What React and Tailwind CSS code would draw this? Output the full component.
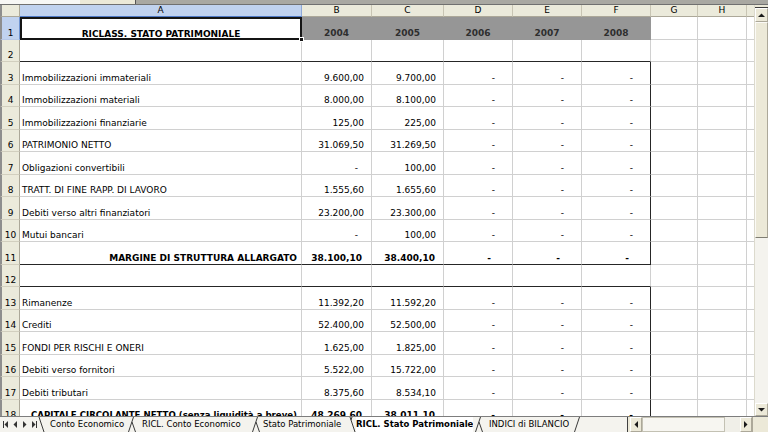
import React from "react";

const F = "font-['DejaVu_Sans',sans-serif]";
const GRID = "grid grid-cols-[20px_282px_70px_72px_69px_69px_69px_47px_49px_1fr]";
const LETTERS = ["A", "B", "C", "D", "E", "F", "G", "H"];

const RB = {
  light: "border-r-[#d0d0d0]",
  dark: "border-r-[#262626]",
  gray: "border-r-[#969696]",
};
const BB = {
  light: "border-b-[#d0d0d0]",
  dark: "border-b-[#262626]",
  gray: "border-b-[#969696]",
};

function Cell({ children, r = "light", b = "light", cls = "" }) {
  return (
    <div
      className={`flex items-end pb-0 overflow-hidden whitespace-nowrap border-r border-b ${RB[r]} ${BB[b]} ${cls}`}
    >
      {children}
    </div>
  );
}

const rows = [
  { n: 2 },
  { n: 3, a: "Immobilizzazioni immateriali", v: ["9.600,00", "9.700,00", "-", "-", "-"] },
  { n: 4, a: "Immobilizzazioni materiali", v: ["8.000,00", "8.100,00", "-", "-", "-"] },
  { n: 5, a: "Immobilizzazioni finanziarie", v: ["125,00", "225,00", "-", "-", "-"] },
  { n: 6, a: "PATRIMONIO NETTO", v: ["31.069,50", "31.269,50", "-", "-", "-"] },
  { n: 7, a: "Obligazioni convertibili", v: ["-", "100,00", "-", "-", "-"] },
  { n: 8, a: "TRATT. DI FINE RAPP. DI LAVORO", v: ["1.555,60", "1.655,60", "-", "-", "-"] },
  { n: 9, a: "Debiti verso altri finanziatori", v: ["23.200,00", "23.300,00", "-", "-", "-"] },
  { n: 10, a: "Mutui bancari", v: ["-", "100,00", "-", "-", "-"] },
  { n: 11, a: "MARGINE DI STRUTTURA ALLARGATO", v: ["38.100,10", "38.400,10", "-", "-", "-"], bold: true, wide: true },
  { n: 12 },
  { n: 13, a: "Rimanenze", v: ["11.392,20", "11.592,20", "-", "-", "-"] },
  { n: 14, a: "Crediti", v: ["52.400,00", "52.500,00", "-", "-", "-"] },
  { n: 15, a: "FONDI PER RISCHI E ONERI", v: ["1.625,00", "1.825,00", "-", "-", "-"] },
  { n: 16, a: "Debiti verso fornitori", v: ["5.522,00", "15.722,00", "-", "-", "-"] },
  { n: 17, a: "Debiti tributari", v: ["8.375,60", "8.534,10", "-", "-", "-"] },
  { n: 18, a: "CAPITALE CIRCOLANTE NETTO (senza liquidità a breve)", v: ["48.269,60", "38.011,10", "-", "-", "-"], bold: true, long: true },
];

function RowHead({ n, sel }) {
  return (
    <div
      className={`flex items-end justify-center pb-0 border-l-2 border-l-[#8e8e8e] border-r border-b ${
        sel ? "bg-[#c0d2ef] border-r-[#6f93d0] border-b-[#b7c8e6]" : "bg-[#ebeadb] border-r-[#aca899] border-b-[#d2cfbf]"
      }`}
    >
      {n}
    </div>
  );
}

function valuePad(col, val, row) {
  if (col <= 1) {
    if (val === "-") return "pr-[13px]";
    if (row.bold) return col === 0 ? "pr-[9px]" : "pr-[8px]";
    return "pr-[7px]";
  }
  return row.wide ? "pr-[21px]" : "pr-[17px]";
}

function DataRow({ row }) {
  const h = row.n % 2 === 1 ? "h-[23px]" : "h-[22px]";
  const inBox = (row.n >= 3 && row.n <= 11) || row.n >= 13;
  const bottomDark = row.n === 2 || row.n === 11 || row.n === 12;
  const b = bottomDark ? "dark" : "light";
  const v = row.v || ["", "", "", "", ""];
  return (
    <div className={`${GRID} ${h} shrink-0`}>
      <RowHead n={row.n} />
      <Cell
        b={b}
        cls={`${row.bold ? "font-bold justify-end pr-[4px]" : "justify-start pl-[2px]"} ${
          row.long ? "text-[8.6px]" : ""
        }`}
      >
        {row.a || ""}
      </Cell>
      {v.map((val, i) => (
        <Cell
          key={i}
          b={b}
          r={i === 4 && inBox ? "dark" : "light"}
          cls={`justify-end ${valuePad(i, val, row)} ${row.bold ? "font-bold" : ""}`}
        >
          {val}
        </Cell>
      ))}
      <Cell />
      <Cell />
      <div className="border-b border-b-[#d0d0d0]" />
    </div>
  );
}

function Tri({ dir }) {
  const pts = {
    up: "0,4 7,4 3.5,0.5",
    down: "0,0 7,0 3.5,3.5",
    left: "4,0 4,7 0.5,3.5",
    right: "0,0 0,7 3.5,3.5",
  }[dir];
  const w = dir === "up" || dir === "down" ? 7 : 4;
  const hh = dir === "up" || dir === "down" ? 4 : 7;
  return (
    <svg width={w} height={hh} viewBox={`0 0 ${w} ${hh}`}>
      <polygon points={pts} fill="#1a1a1a" />
    </svg>
  );
}

function VScroll() {
  return (
    <div className="w-[14px] flex flex-col bg-[#f4f3ee] border-l border-l-[#dcdacd]">
      <div className="h-[3px] bg-[#ece9d8] border-b border-b-[#3c3c3c] shrink-0" />
      <div className="h-[14px] shrink-0 flex items-center justify-center bg-[#ece9d8] border border-t-white border-l-white border-r-[#aca899] border-b-[#aca899]">
        <Tri dir="up" />
      </div>
      <div className="h-[216px] shrink-0 bg-[#ece9d8] border border-t-[#fbfaf6] border-l-[#fbfaf6] border-r-[#aca899] border-b-[#7f7d72]" />
      <div className="flex-1" />
      <div className="h-[13px] shrink-0 flex items-center justify-center bg-[#ece9d8] border border-t-white border-l-white border-r-[#aca899] border-b-[#aca899]">
        <Tri dir="down" />
      </div>
    </div>
  );
}

function NavBtns() {
  return (
    <div className="w-[38px] shrink-0 flex items-center">
      <svg width="5" height="7" viewBox="0 0 5 7" className="ml-[3px]">
        <rect x="0" y="0" width="1" height="7" fill="#333" />
        <polygon points="5,0 5,7 1.5,3.5" fill="#333" />
      </svg>
      <svg width="4" height="7" viewBox="0 0 4 7" className="ml-[5px]">
        <polygon points="4,0 4,7 0.5,3.5" fill="#333" />
      </svg>
      <svg width="4" height="7" viewBox="0 0 4 7" className="ml-[6px]">
        <polygon points="0,0 0,7 3.5,3.5" fill="#333" />
      </svg>
      <svg width="5" height="7" viewBox="0 0 5 7" className="ml-[5px]">
        <polygon points="0,0 0,7 3.5,3.5" fill="#333" />
        <rect x="4" y="0" width="1" height="7" fill="#333" />
      </svg>
    </div>
  );
}

function Sep({ kind }) {
  if (kind === "start")
    return (
      <svg width="9" height="15" className="shrink-0">
        <line x1="1" y1="0" x2="6" y2="15" stroke="#3a3a3a" />
      </svg>
    );
  if (kind === "end")
    return (
      <svg width="9" height="15" className="shrink-0">
        <line x1="7.5" y1="0" x2="2.5" y2="15" stroke="#3a3a3a" />
      </svg>
    );
  if (kind === "activeLeft")
    return (
      <svg width="8" height="15" className="shrink-0">
        <line x1="2" y1="0" x2="7" y2="15" stroke="#3a3a3a" />
        <line x1="4" y1="0" x2="3" y2="3" stroke="#3a3a3a" />
      </svg>
    );
  return (
    <svg width="12" height="15" className="shrink-0">
      <line x1="7.5" y1="0" x2="2.5" y2="15" stroke="#3a3a3a" />
      <line x1="6" y1="5" x2="9.5" y2="15" stroke="#3a3a3a" />
    </svg>
  );
}

function TabBar() {
  return (
    <div className="h-[16px] shrink-0 flex bg-[#f4f3ee] border-t border-t-[#7d7d7d] text-[8.5px] leading-[15px]">
      <NavBtns />
      <Sep kind="start" />
      <div className="w-[79px] shrink-0 pl-[3px] whitespace-nowrap">Conto Economico</div>
      <Sep kind="mid" />
      <div className="w-[112px] shrink-0 pl-[4px] whitespace-nowrap">RICL. Conto Economico</div>
      <Sep kind="mid" />
      <div className="w-[86px] shrink-0 pl-[1px] whitespace-nowrap">Stato Patrimoniale</div>
      <Sep kind="activeLeft" />
      <div className="w-[117px] shrink-0 bg-white font-bold whitespace-nowrap overflow-hidden">
        RICL. Stato Patrimoniale
      </div>
      <Sep kind="mid" />
      <div className="w-[87px] shrink-0 pl-[4px] whitespace-nowrap">INDICI di BILANCIO</div>
      <Sep kind="end" />
      <div className="flex-1" />
      <div className="w-[3px] shrink-0 border-l border-l-[#404040] bg-[#ece9d8]" />
      <div className="w-[12px] shrink-0 flex items-center justify-center bg-[#ece9d8] border border-t-white border-l-white border-r-[#aca899] border-b-[#aca899]">
        <Tri dir="left" />
      </div>
      <div className="w-[83px] shrink-0 bg-[#f7f6f1] border border-[#c3c1b3]" />
      <div className="w-[15px] shrink-0 bg-[#f0efe8]" />
      <div className="w-[12px] shrink-0 flex items-center justify-center bg-[#ece9d8] border border-t-white border-l-white border-r-[#aca899] border-b-[#aca899]">
        <Tri dir="right" />
      </div>
      <div className="w-[16px] shrink-0 bg-[#ece9d8] border-l border-l-[#aca899]" />
    </div>
  );
}

export default function App() {
  return (
    <div className={`w-[768px] h-[432px] overflow-hidden bg-white flex flex-col text-black ${F} text-[9px] leading-[11px]`}>
      <div className="h-[5px] shrink-0 flex border-b border-b-[#707070]">
        <div className="w-[80px] bg-[#f7f7f5]" />
        <div className="w-[56px] bg-[#ece9d8] border-r border-r-[#555]" />
        <div className="flex-1 bg-[#a9a8a2]" />
      </div>
      <div className="h-[411px] shrink-0 flex">
        <div className="flex-1 flex flex-col overflow-hidden">
          <div className={`${GRID} h-[12px] shrink-0`}>
            <div className="bg-[#ebeadb] border-l-2 border-l-[#8e8e8e] border-r border-b border-r-[#aca899] border-b-[#aca899]" />
            {LETTERS.map((l) => (
              <div
                key={l}
                className={`flex items-center justify-center border-r border-b ${
                  l === "A"
                    ? "bg-[#c0d2ef] border-r-[#8fa9d8] border-b-[#4f7ac6]"
                    : "bg-[#ebeadb] border-r-[#c8c5b4] border-b-[#aca899]"
                }`}
              >
                {l}
              </div>
            ))}
            <div className="bg-[#ebeadb] border-b border-b-[#aca899]" />
          </div>
          <div className={`${GRID} h-[23px] shrink-0`}>
            <RowHead n={1} sel />
            <div className="relative flex items-end justify-center pb-0 leading-[8px] border-2 border-[#141414] font-bold whitespace-nowrap">
              RICLASS. STATO PATRIMONIALE
              <div className="absolute right-[-4px] bottom-[-4px] w-[5px] h-[5px] bg-[#141414] border border-white z-10" />
            </div>
            {["2004", "2005", "2006", "2007", "2008"].map((y) => (
              <Cell key={y} r="gray" b="gray" cls="justify-center bg-[#969696] text-[#2e2e2e] font-bold">
                {y}
              </Cell>
            ))}
            <Cell />
            <Cell />
            <div className="border-b border-b-[#d0d0d0]" />
          </div>
          {rows.map((row) => (
            <DataRow key={row.n} row={row} />
          ))}
        </div>
        <VScroll />
      </div>
      <TabBar />
    </div>
  );
}
